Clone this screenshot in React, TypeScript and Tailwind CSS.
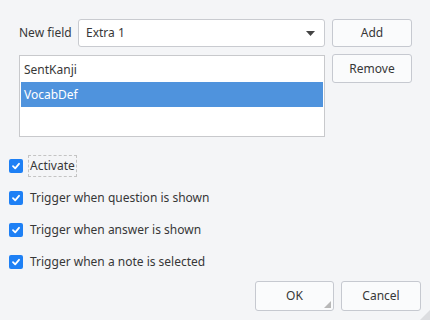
import React from "react";

function Check({ label, focus }: { label: string; focus?: boolean }) {
  return (
    <div className="flex h-8 items-center">
      <div className="flex h-[14px] w-[14px] items-center justify-center rounded-[2px] bg-[#1e80f5]">
        <svg width="10" height="10" viewBox="0 0 10 10">
          <path d="M2 5.2 L4.2 7.3 L8 2.8" fill="none" stroke="white" strokeWidth="1.8" strokeLinecap="round" strokeLinejoin="round" />
        </svg>
      </div>
      <span
        className={
          "ml-[5px] flex h-[22px] items-center px-[1px] " +
          (focus ? "border border-dashed border-[#c4c4c4]" : "border border-transparent")
        }
      >
        {label}
      </span>
    </div>
  );
}

function Btn({ children, grip }: { children: React.ReactNode; grip?: boolean }) {
  return (
    <div className="relative flex h-full w-full items-center justify-center rounded-[3px] border border-[#c6c9d0] bg-[#fafbfc]">
      {children}
      {grip && (
        <svg className="absolute bottom-[2px] right-[2px]" width="7" height="7" viewBox="0 0 7 7">
          <path d="M7 0 L7 7 L0 7 Z" fill="#b8b8b8" />
        </svg>
      )}
    </div>
  );
}

export default function App() {
  return (
    <div
      className="relative flex h-[320px] w-[430px] flex-col overflow-hidden bg-[#f4f5f7] text-[12px] text-[#373737]"
      style={{ fontFamily: '"Noto Sans", sans-serif' }}
    >
      <div className="flex pl-[19px] pr-[18px] pt-[19px]">
        <div className="flex w-[306px] flex-col">
          <div className="flex h-[28px] items-center">
            <span className="w-[59px]">New field</span>
            <div className="flex h-full flex-1 items-center justify-between rounded-[3px] border border-[#c9cbd0] bg-white pl-[7px] pr-[9px]">
              <span>Extra 1</span>
              <svg width="9" height="5" viewBox="0 0 9 5">
                <path d="M0 0 L9 0 L4.5 5 Z" fill="#444" />
              </svg>
            </div>
          </div>
          <div className="mt-[8px] h-[82px] border border-[#c8c9cc] bg-white p-px">
            <div className="flex h-[25px] items-center pl-[3px]">SentKanji</div>
            <div className="flex h-[25px] items-center bg-[#4f93dd] pl-[3px] text-white">VocabDef</div>
          </div>
        </div>
        <div className="ml-[7px] flex w-[80px] flex-col">
          <div className="h-[28px]">
            <Btn>Add</Btn>
          </div>
          <div className="mt-[7px] h-[29px]">
            <Btn>Remove</Btn>
          </div>
        </div>
      </div>
      <div className="mt-[13px] flex flex-col pl-[9px]">
        <Check label="Activate" focus />
        <Check label="Trigger when question is shown" />
        <Check label="Trigger when answer is shown" />
        <Check label="Trigger when a note is selected" />
      </div>
      <div className="mt-[3px] flex justify-end gap-[7px] pr-[9px]">
        <div className="h-[30px] w-[79px]">
          <Btn grip>OK</Btn>
        </div>
        <div className="h-[30px] w-[80px]">
          <Btn>Cancel</Btn>
        </div>
      </div>
      <svg className="absolute bottom-0 right-0" width="10" height="10" viewBox="0 0 10 10">
        <path d="M10 0 L10 10 L0 10 Z" fill="#dcdde0" />
      </svg>
    </div>
  );
}
